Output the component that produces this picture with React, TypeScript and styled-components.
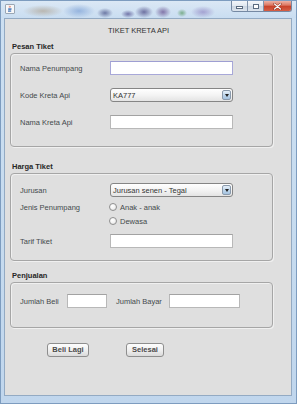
import React from "react";
import styled, { createGlobalStyle } from "styled-components";

const GlobalStyle = createGlobalStyle`
  html, body {
    margin: 0;
    padding: 0;
    background: #ffffff;
  }
  body {
    font-family: "Liberation Sans", Arial, sans-serif;
  }
`;

export default function App() {
  return (
    <>
      <GlobalStyle />
      <Window>
        <TitleBar>
          <AppIcon>
            <svg width="8" height="8" viewBox="0 0 8 8">
              <path d="M2 5.5h3.2v1.2H2z" fill="#3d6fb5" />
              <path d="M2.2 3.2h2.8v2H2.2z" fill="#5b87c4" />
              <path d="M5 3.6h.9v1H5z" fill="#5b87c4" />
              <path d="M3.2 0.8c.8.6-.6 1 .2 1.8M4.2 0.9c.6.5-.4.9.1 1.5" stroke="#d0402c" strokeWidth="0.6" fill="none" />
            </svg>
          </AppIcon>
          <Controls>
            <CaptionButton aria-label="minimize">
              <MinGlyph />
            </CaptionButton>
            <CaptionButton aria-label="maximize">
              <MaxGlyph />
            </CaptionButton>
            <CloseButton aria-label="close">
              <svg width="9" height="7" viewBox="0 0 9 7">
                <path d="M1.5 1l6 5M7.5 1l-6 5" stroke="#7a2a1c" strokeWidth="2.2" strokeLinecap="round" />
                <path d="M1.5 1l6 5M7.5 1l-6 5" stroke="#ffffff" strokeWidth="1.2" strokeLinecap="round" />
              </svg>
            </CloseButton>
          </Controls>
        </TitleBar>

        <Body>
          <Heading>TIKET KRETA API</Heading>

          <Section $top={6}>
            <Legend>Pesan Tiket</Legend>
            <Panel $padTop={7} $padBottom={17}>
              <FormRow $h={14}>
                <Label>Nama Penumpang</Label>
                <TextField $focused />
              </FormRow>
              <FormRow $h={14} $mt={13}>
                <Label>Kode Kreta Api</Label>
                <Combo>
                  <ComboText>KA777</ComboText>
                  <ComboArrow>
                    <ArrowTri />
                  </ComboArrow>
                </Combo>
              </FormRow>
              <FormRow $h={14} $mt={13}>
                <Label>Nama Kreta Api</Label>
                <TextField />
              </FormRow>
            </Panel>
          </Section>

          <Section $top={15}>
            <Legend>Harga Tiket</Legend>
            <Panel $padTop={9} $padBottom={12}>
              <FormRow $h={14}>
                <Label>Jurusan</Label>
                <Combo>
                  <ComboText>Jurusan senen - Tegal</ComboText>
                  <ComboArrow>
                    <ArrowTri />
                  </ComboArrow>
                </Combo>
              </FormRow>
              <FormRow $h={12} $mt={4}>
                <Label>Jenis Penumpang</Label>
                <RadioOption>
                  <RadioDot />
                  Anak - anak
                </RadioOption>
              </FormRow>
              <FormRow $h={12} $mt={2}>
                <span />
                <RadioOption>
                  <RadioDot />
                  Dewasa
                </RadioOption>
              </FormRow>
              <FormRow $h={14} $mt={7}>
                <Label>Tarif Tiket</Label>
                <TextField />
              </FormRow>
            </Panel>
          </Section>

          <Section $top={10}>
            <Legend>Penjualan</Legend>
            <Panel $padTop={11} $padBottom={19}>
              <SalesRow>
                <SalesLabel $w={47}>Jumlah Beli</SalesLabel>
                <TextField $w={40} />
                <SalesLabel $w={53} $ml={9}>
                  Jumlah Bayar
                </SalesLabel>
                <TextField $w={71} />
              </SalesRow>
            </Panel>
          </Section>

          <ButtonBar>
            <PushButton $w={42}>Beli Lagi</PushButton>
            <PushButton $w={38}>Selesai</PushButton>
          </ButtonBar>
        </Body>
      </Window>
    </>
  );
}

const Window = styled.div`
  width: 297px;
  height: 404px;
  box-sizing: border-box;
  display: flex;
  flex-direction: column;
  border: 1px solid #7d9cbf;
  background: linear-gradient(180deg, #cde0f2 0%, #c6dbef 60%, #c0d6ed 100%);
`;

const TitleBar = styled.div`
  height: 17px;
  display: flex;
  justify-content: space-between;
  align-items: flex-start;
  background:
    radial-gradient(ellipse 20px 6px at 42px 10px, rgba(175, 165, 150, 0.7), transparent),
    radial-gradient(ellipse 16px 7px at 78px 10px, rgba(130, 165, 215, 0.75), transparent),
    radial-gradient(ellipse 8px 5px at 104px 12px, rgba(85, 95, 145, 0.8), transparent),
    radial-gradient(ellipse 7px 4px at 127px 13px, rgba(90, 90, 150, 0.8), transparent),
    radial-gradient(ellipse 9px 6px at 143px 11px, rgba(85, 85, 140, 0.8), transparent),
    radial-gradient(ellipse 8px 6px at 162px 11px, rgba(110, 90, 150, 0.8), transparent),
    radial-gradient(ellipse 5px 4px at 181px 12px, rgba(100, 160, 115, 0.8), transparent),
    radial-gradient(ellipse 12px 6px at 202px 11px, rgba(145, 135, 195, 0.7), transparent),
    linear-gradient(180deg, #dbe8f5 0%, #c9ddf1 100%);
`;

const AppIcon = styled.div`
  width: 8px;
  height: 8px;
  margin: 3px 0 0 4px;
  border: 1px solid #9aa7b5;
  border-radius: 1px;
  background: #f8f8f8;
  display: flex;
`;

const Controls = styled.div`
  display: flex;
  margin-right: 4px;
  height: 10px;
  border: 1px solid #7589a3;
  border-top: none;
  border-radius: 0 0 3px 3px;
  overflow: hidden;
`;

const CaptionButton = styled.div`
  width: 16px;
  height: 10px;
  box-sizing: border-box;
  display: flex;
  align-items: center;
  justify-content: center;
  border-right: 1px solid #8193aa;
  background: linear-gradient(180deg, #f3f6fa 0%, #e2e9f1 45%, #ccd7e3 55%, #dce4ed 100%);
`;

const MinGlyph = styled.span`
  width: 5px;
  height: 1px;
  margin-top: 3px;
  background: #ffffff;
  border: 1px solid #5a6b80;
`;

const MaxGlyph = styled.span`
  width: 4px;
  height: 3px;
  border: 1px solid #5a6b80;
  background: #ffffff;
`;

const CloseButton = styled.div`
  width: 27px;
  height: 10px;
  display: flex;
  align-items: center;
  justify-content: center;
  background: linear-gradient(180deg, #eeb3a6 0%, #dd7b66 40%, #c9442c 55%, #d65f45 100%);
`;

const Body = styled.div`
  flex: 1;
  margin: 0 4px 7px 3px;
  border: 1px solid #93aac3;
  background: #dfdfdf;
  display: flex;
  flex-direction: column;
`;

const Heading = styled.div`
  padding: 7px 0 0 103px;
  line-height: 10px;
  font-size: 7.5px;
  color: #333333;
`;

const Section = styled.section<{ $top: number }>`
  margin-top: ${({ $top }) => $top}px;
  padding-left: 5px;
`;

const Legend = styled.div`
  padding-left: 2px;
  margin-bottom: 1px;
  line-height: 10px;
  font-size: 7.5px;
  font-weight: bold;
  color: #262626;
`;

const Panel = styled.div<{ $padTop: number; $padBottom: number }>`
  width: 263px;
  box-sizing: border-box;
  padding: ${({ $padTop }) => $padTop}px 0 ${({ $padBottom }) => $padBottom}px 9px;
  border: 1px solid #a6a6a6;
  border-radius: 4px;
  box-shadow: inset 1px 1px 0 #f0f0f0, 1px 1px 0 #f0f0f0;
  display: flex;
  flex-direction: column;
`;

const FormRow = styled.div<{ $h: number; $mt?: number }>`
  display: grid;
  grid-template-columns: 90px 123px;
  align-items: center;
  height: ${({ $h }) => $h}px;
  margin-top: ${({ $mt }) => $mt ?? 0}px;
`;

const Label = styled.span`
  font-size: 7.5px;
  color: #444a4d;
  white-space: nowrap;
`;

const TextField = styled.div<{ $focused?: boolean; $w?: number }>`
  width: ${({ $w }) => $w ?? 123}px;
  height: 14px;
  box-sizing: border-box;
  background: #ffffff;
  border: 1px solid ${({ $focused }) => ($focused ? "#a8a8d8" : "#b8b8b8")};
  border-top-color: ${({ $focused }) => ($focused ? "#9e9ed2" : "#a2a2a2")};
`;

const Combo = styled.div`
  width: 123px;
  height: 14px;
  box-sizing: border-box;
  display: flex;
  align-items: center;
  padding-left: 2px;
  border: 1px solid #858585;
  border-radius: 3px;
  background: linear-gradient(180deg, #ffffff 0%, #f4f4f4 50%, #e4e4e4 100%);
`;

const ComboText = styled.span`
  font-size: 7.5px;
  color: #333333;
  white-space: nowrap;
`;

const ComboArrow = styled.span`
  margin-left: auto;
  margin-right: 1px;
  width: 9px;
  height: 10px;
  box-sizing: border-box;
  display: flex;
  align-items: center;
  justify-content: center;
  border: 1px solid #8a9aac;
  border-radius: 2px;
  background: linear-gradient(180deg, #e6f0f9 0%, #bcd4ea 55%, #a5c3e0 100%);
`;

const ArrowTri = styled.span`
  width: 0;
  height: 0;
  border-left: 2px solid transparent;
  border-right: 2px solid transparent;
  border-top: 3px solid #222222;
`;

const RadioOption = styled.span`
  display: flex;
  align-items: center;
  gap: 3px;
  margin-left: -1px;
  font-size: 7.5px;
  color: #444a4d;
  white-space: nowrap;
`;

const RadioDot = styled.span`
  width: 8px;
  height: 8px;
  box-sizing: border-box;
  border-radius: 50%;
  border: 1px solid #8f8f8f;
  background: radial-gradient(circle at 40% 35%, #ffffff 0%, #f2f2f2 50%, #d6d6d6 100%);
`;

const SalesRow = styled.div`
  display: flex;
  align-items: center;
  height: 14px;
`;

const SalesLabel = styled(Label)<{ $w: number; $ml?: number }>`
  width: ${({ $w }) => $w}px;
  margin-left: ${({ $ml }) => $ml ?? 0}px;
`;

const ButtonBar = styled.div`
  display: flex;
  gap: 37px;
  margin-top: 15px;
  padding-left: 42px;
`;

const PushButton = styled.button<{ $w: number }>`
  width: ${({ $w }) => $w}px;
  height: 14px;
  padding: 0;
  box-sizing: border-box;
  border: 1px solid #8e8e8e;
  border-radius: 3px;
  background: linear-gradient(180deg, #fdfdfd 0%, #f0f0f0 50%, #dadada 100%);
  font-family: "Liberation Sans", Arial, sans-serif;
  font-size: 7.5px;
  font-weight: bold;
  color: #4a4a4a;
  line-height: 12px;
`;
